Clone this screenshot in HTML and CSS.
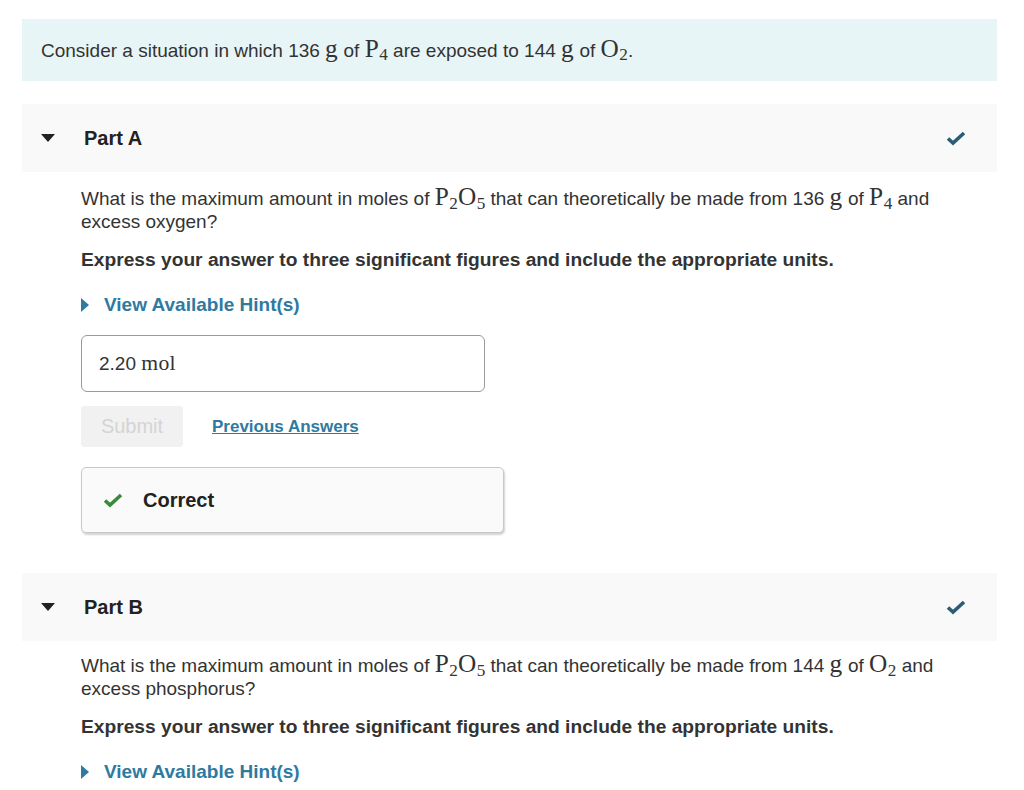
FILE: index.html
```html
<!DOCTYPE html>
<html>
<head>
<meta charset="utf-8">
<link rel="stylesheet" href="styles.css">
</head>
<body>
<div class="page">
  <div class="intro"><p>Consider a situation in which 136 <span class="m">g</span> of <span class="m">P<sub>4</sub></span> are exposed to 144 <span class="m">g</span> of <span class="m">O<sub>2</sub></span>.</p></div>

  <section class="part">
    <div class="part-head">
      <span class="caret-down"></span>
      <span class="part-title">Part A</span>
      <svg class="done" viewBox="0 0 20 16" width="20" height="16"><path d="M2 8.5 L7 13 L18 3" fill="none" stroke="#2b5d76" stroke-width="3.6"/></svg>
    </div>
    <div class="part-body">
      <p class="q">What is the maximum amount in moles of <span class="m">P<sub>2</sub>O<sub>5</sub></span> that can theoretically be made from 136 <span class="m">g</span> of <span class="m">P<sub>4</sub></span> and excess oxygen?</p>
      <p class="instr">Express your answer to three significant figures and include the appropriate units.</p>
      <div class="hint"><span class="caret-right"></span><span>View Available Hint(s)</span></div>
      <div class="answer"><p>2.20 <span class="m">mol</span></p></div>
      <div class="actions">
        <span class="submit">Submit</span>
        <a class="prev">Previous Answers</a>
      </div>
      <div class="feedback">
        <svg viewBox="0 0 20 16" width="20" height="16"><path d="M2 8.5 L7 13 L18 3" fill="none" stroke="#3a8a3c" stroke-width="3.6"/></svg>
        <span>Correct</span>
      </div>
    </div>
  </section>

  <section class="part">
    <div class="part-head">
      <span class="caret-down"></span>
      <span class="part-title">Part B</span>
      <svg class="done" viewBox="0 0 20 16" width="20" height="16"><path d="M2 8.5 L7 13 L18 3" fill="none" stroke="#2b5d76" stroke-width="3.6"/></svg>
    </div>
    <div class="part-body partb">
      <p class="q">What is the maximum amount in moles of <span class="m">P<sub>2</sub>O<sub>5</sub></span> that can theoretically be made from 144 <span class="m">g</span> of <span class="m">O<sub>2</sub></span> and excess phosphorus?</p>
      <p class="instr">Express your answer to three significant figures and include the appropriate units.</p>
      <div class="hint"><span class="caret-right"></span><span>View Available Hint(s)</span></div>
    </div>
  </section>
</div>
</body>
</html>
```
FILE: styles.css
```css
* { box-sizing: border-box; }
html, body { margin: 0; padding: 0; background: #fff; }
body {
  font-family: "Liberation Sans", Arial, sans-serif;
  font-size: 19px;
  color: #333;
}
p { margin: 0; }
.page { padding: 19px 27px 0 22px; }
.intro {
  background: #e8f5f7;
  height: 62px;
  display: flex;
  align-items: center;
  padding: 0 19px;
  margin-bottom: 23px;
}
.intro p { line-height: 23px; }
.m {
  font-family: "Liberation Serif", "Times New Roman", serif;
  font-size: 1.33em;
  letter-spacing: 0.5px;
  color: #333;
  line-height: 14px;
}
.m sub {
  font-size: 0.68em;
  vertical-align: baseline;
  position: relative;
  top: 0.22em;
  letter-spacing: 0;
  line-height: 0;
}
.part-head {
  background: #f9f9f9;
  height: 68px;
  display: flex;
  align-items: center;
  padding: 0 31px 0 19px;
}
.caret-down {
  width: 0; height: 0;
  border-left: 7px solid transparent;
  border-right: 7px solid transparent;
  border-top: 8px solid #222;
  margin-right: 29px;
}
.part-title { font-weight: bold; font-size: 20px; color: #222; flex: 1; }
.part-body { padding: 15px 0 40px 59px; }
.partb { padding-top: 13px; }
.q { line-height: 23px; max-width: 880px; }
.instr { margin-top: 15px; font-weight: bold; line-height: 23px; font-size: 19.2px; }
.hint {
  margin-top: 23px;
  display: flex;
  align-items: center;
  color: #2e7aa0;
  font-weight: bold;
}
.caret-right {
  width: 0; height: 0;
  border-top: 7px solid transparent;
  border-bottom: 7px solid transparent;
  border-left: 8px solid #2e7aa0;
  margin-right: 15px;
}
.answer {
  margin-top: 19px;
  width: 404px;
  height: 57px;
  border: 1px solid #9a9a9a;
  border-radius: 6px;
  display: flex;
  align-items: center;
  padding: 0 17px;
}
.answer .m { font-size: 1.14em; letter-spacing: 0.3px; }
.actions { margin-top: 14px; display: flex; align-items: center; }
.submit {
  width: 102px; height: 41px;
  background: #f1f1f1;
  border-radius: 3px;
  color: #d4d4d4;
  display: flex; align-items: center; justify-content: center;
  font-size: 20px;
}
.prev {
  margin-left: 29px;
  color: #2e7aa0;
  font-weight: bold;
  font-size: 17px;
  text-decoration: underline;
}
.feedback {
  margin-top: 20px;
  width: 423px; height: 66px;
  border: 1px solid #c8c8c8;
  border-radius: 5px;
  background: #fafafa;
  box-shadow: 1px 2px 2px rgba(0,0,0,0.18);
  display: flex; align-items: center;
  padding-left: 21px;
  font-weight: bold; font-size: 20px; color: #222;
}
.feedback svg { margin-right: 20px; }
```
